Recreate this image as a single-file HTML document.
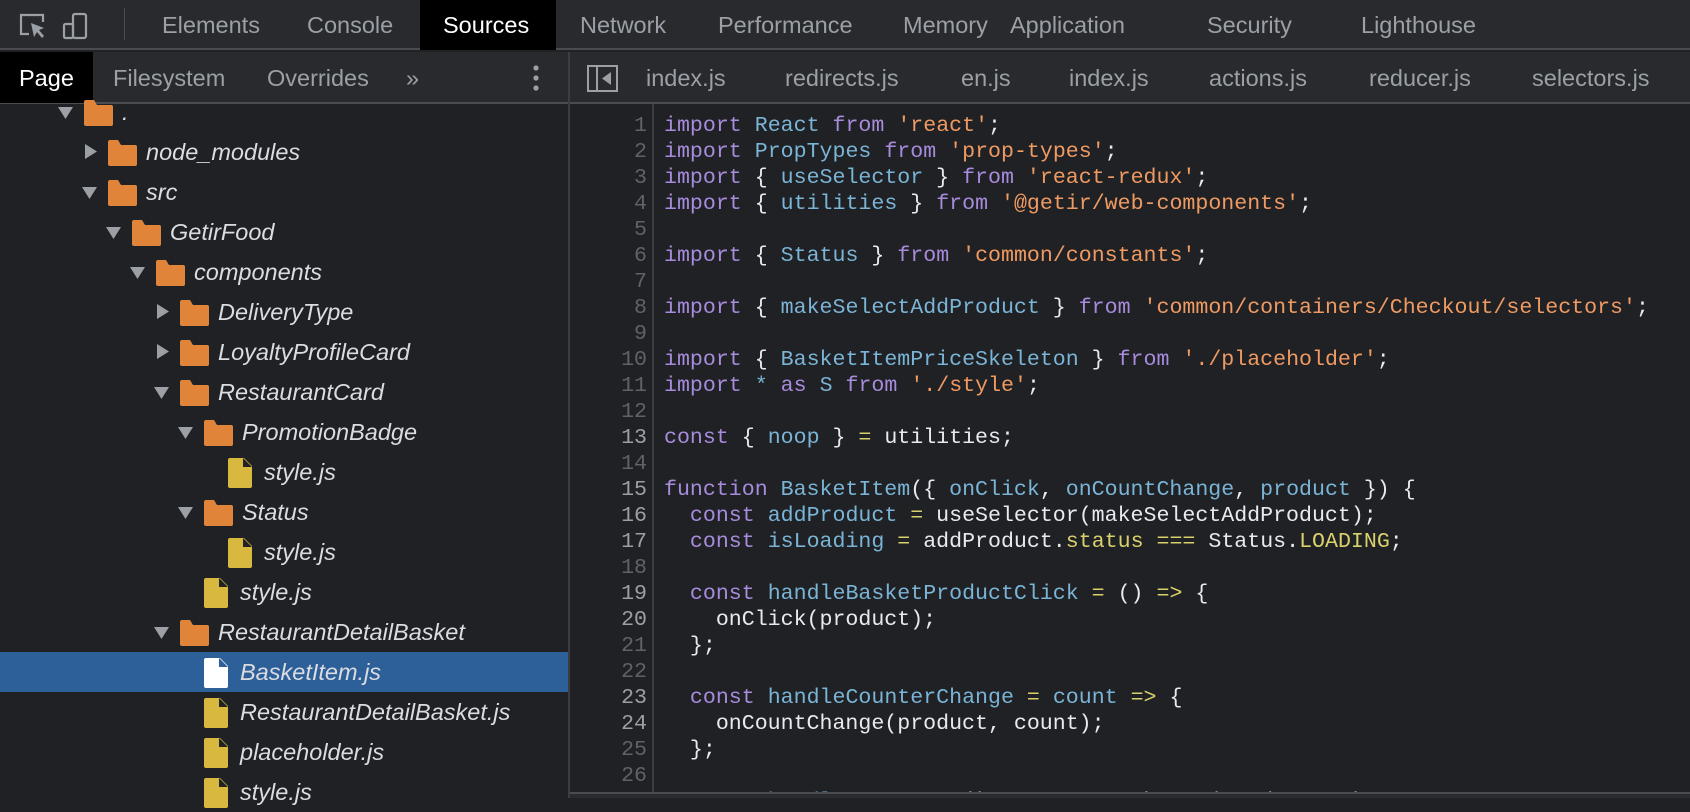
<!DOCTYPE html>
<html><head><meta charset="utf-8"><style>
*{margin:0;padding:0;box-sizing:border-box}
body{width:1690px;height:798px;overflow:hidden;background:#202124;font-family:"Liberation Sans",sans-serif;position:relative}
.a{position:absolute;white-space:nowrap}
.tb{left:0;top:0;width:1690px;height:50px;background:#292a2d;border-bottom:2px solid #4a4c50}
.r2{left:0;top:52px;width:1690px;height:52px;background:#292a2d;border-bottom:2px solid #4a4c50}
.t{font-size:23.5px;color:#9aa0a6;line-height:50px;top:0}
.t2{font-size:23.5px;color:#9aa0a6;line-height:52px;top:52px}
.tree .row{position:absolute;left:0;width:568px;height:40px}
.tree .nm{position:absolute;top:0;line-height:40px;font-size:23.5px;font-style:italic;color:#dadce0}
.code{font-family:"Liberation Mono",monospace;font-size:21.6px;line-height:26px}
.ln{position:absolute;width:80px;text-align:right;color:#5f6368}
.ln.b{color:#9aa0a6}
.cl{position:absolute;left:664px;color:#e8eaed}
.k{color:#a78bdc}.i{color:#7ab4d6}.s{color:#ef9a62}.o{color:#d9d16c}
</style></head><body>
<div class="a tb"></div>
<svg class="a" style="left:18px;top:12px" width="70" height="28" viewBox="0 0 70 28">
<path d="M11 22H3V3h22v7" fill="none" stroke="#9aa0a6" stroke-width="2.2"/>
<path d="M13 11l13 5-5 2 5 6-2 2-5-6-3 5z" fill="#9aa0a6"/>
<rect x="55" y="2" width="13" height="24" rx="2" fill="none" stroke="#9aa0a6" stroke-width="2.2"/>
<rect x="46" y="12" width="9" height="14" rx="1.5" fill="none" stroke="#9aa0a6" stroke-width="2.2"/>
</svg>
<div class="a" style="left:124px;top:8px;width:1px;height:32px;background:#4a4c50"></div>
<div class="a" style="left:420px;top:0;width:136px;height:50px;background:#000"></div>
<div class="a t" style="left:162px">Elements</div>
<div class="a t" style="left:307px">Console</div>
<div class="a t" style="left:443px;color:#fff">Sources</div>
<div class="a t" style="left:580px">Network</div>
<div class="a t" style="left:718px">Performance</div>
<div class="a t" style="left:903px">Memory</div>
<div class="a t" style="left:1010px">Application</div>
<div class="a t" style="left:1207px">Security</div>
<div class="a t" style="left:1361px">Lighthouse</div>

<div class="a r2"></div>
<div class="a" style="left:0;top:52px;width:93px;height:51px;background:#000"></div>
<div class="a t2" style="left:19px;color:#fff">Page</div>
<div class="a t2" style="left:113px">Filesystem</div>
<div class="a t2" style="left:267px">Overrides</div>
<div class="a t2" style="left:406px">»</div>
<svg class="a" style="left:531px;top:64px" width="10" height="30"><circle cx="5" cy="4" r="2.6" fill="#9aa0a6"/><circle cx="5" cy="14" r="2.6" fill="#9aa0a6"/><circle cx="5" cy="24" r="2.6" fill="#9aa0a6"/></svg>
<div class="a" style="left:568px;top:52px;width:2px;height:746px;background:#3c3d41"></div>
<svg class="a" style="left:587px;top:65px" width="32" height="28"><rect x="1" y="1" width="29" height="25" fill="none" stroke="#9aa0a6" stroke-width="2"/><line x1="10" y1="1" x2="10" y2="26" stroke="#9aa0a6" stroke-width="2"/><path d="M24 7v13l-9-6.5z" fill="#9aa0a6"/></svg>
<div class="a t2" style="left:646px">index.js</div>
<div class="a t2" style="left:785px">redirects.js</div>
<div class="a t2" style="left:961px">en.js</div>
<div class="a t2" style="left:1069px">index.js</div>
<div class="a t2" style="left:1209px">actions.js</div>
<div class="a t2" style="left:1369px">reducer.js</div>
<div class="a t2" style="left:1532px">selectors.js</div>

<div class="tree" id="tree"></div>
<div class="a" style="left:570px;top:104px;width:1120px;height:688px;overflow:hidden">
<div class="code" id="code" style="position:absolute;left:-570px;top:-104px;width:1690px;height:798px"></div>
</div>
<div class="a" style="left:652px;top:104px;width:2px;height:688px;background:#3c3d41"></div>
<div class="a" style="left:570px;top:792px;width:1120px;height:6px;background:#2a2b2e;border-top:2px solid #4a4c50"></div>

<script>
var T=[[0,'f','d','.'],[1,'f','r','node_modules'],[1,'f','d','src'],[2,'f','d','GetirFood'],[3,'f','d','components'],[4,'f','r','DeliveryType'],[4,'f','r','LoyaltyProfileCard'],[4,'f','d','RestaurantCard'],[5,'f','d','PromotionBadge'],[6,'j','','style.js'],[5,'f','d','Status'],[6,'j','','style.js'],[5,'j','','style.js'],[4,'f','d','RestaurantDetailBasket'],[5,'j','','BasketItem.js',1],[5,'j','','RestaurantDetailBasket.js'],[5,'j','','placeholder.js'],[5,'j','','style.js']];
var h='';
T.forEach(function(r,i){
 var ax=58+24*r[0],top=92+40*i,sel=r[4];
 h+='<div class="row" style="top:'+top+'px;'+(sel?'background:#2d5f99':'')+'">';
 if(r[2]=='d')h+='<svg class="a" style="left:'+ax+'px;top:14px" width="16" height="14"><path d="M0 1h15L7.5 13z" fill="#9aa0a6"/></svg>';
 if(r[2]=='r')h+='<svg class="a" style="left:'+(ax+2)+'px;top:12px" width="14" height="16"><path d="M1 0v15L13 7.5z" fill="#9aa0a6"/></svg>';
 var ix=ax+26;
 if(r[1]=='f')h+='<svg class="a" style="left:'+ix+'px;top:8px" width="29" height="26"><path d="M0 2a2 2 0 0 1 2-2h8l3 5h14a2 2 0 0 1 2 2v17a2 2 0 0 1-2 2H2a2 2 0 0 1-2-2z" fill="#e0843a"/></svg>';
 else h+='<svg class="a" style="left:'+ix+'px;top:6px" width="24" height="30"><path d="M2 0h14l8 8v20a2 2 0 0 1-2 2H2a2 2 0 0 1-2-2V2a2 2 0 0 1 2-2z" fill="'+(sel?'#fff':'#d9b83f')+'"/><path d="M15 0l9 9h-9z" fill="'+(sel?'#2d5f99':'#202124')+'"/></svg>';
 h+='<div class="nm" style="left:'+(ax+(r[1]=='f'?64:62))+'px">'+r[3]+'</div></div>';
});
document.getElementById('tree').innerHTML=h;
function k(s){return '<span class="k">'+s+'</span>'}
function i(s){return '<span class="i">'+s+'</span>'}
function s(x){return '<span class="s">'+x+'</span>'}
function o(x){return '<span class="o">'+x+'</span>'}
var L=[
k('import')+' '+i('React')+' '+k('from')+' '+s("'react'")+';',
k('import')+' '+i('PropTypes')+' '+k('from')+' '+s("'prop-types'")+';',
k('import')+' { '+i('useSelector')+' } '+k('from')+' '+s("'react-redux'")+';',
k('import')+' { '+i('utilities')+' } '+k('from')+' '+s("'@getir/web-components'")+';',
'',
k('import')+' { '+i('Status')+' } '+k('from')+' '+s("'common/constants'")+';',
'',
k('import')+' { '+i('makeSelectAddProduct')+' } '+k('from')+' '+s("'common/containers/Checkout/selectors'")+';',
'',
k('import')+' { '+i('BasketItemPriceSkeleton')+' } '+k('from')+' '+s("'./placeholder'")+';',
k('import')+' '+i('*')+' '+k('as')+' '+i('S')+' '+k('from')+' '+s("'./style'")+';',
'',
k('const')+' { '+i('noop')+' } '+o('=')+' utilities;',
'',
k('function')+' '+i('BasketItem')+'({ '+i('onClick')+', '+i('onCountChange')+', '+i('product')+' }) {',
'  '+k('const')+' '+i('addProduct')+' '+o('=')+' useSelector(makeSelectAddProduct);',
'  '+k('const')+' '+i('isLoading')+' '+o('=')+' addProduct.'+o('status')+' '+o('===')+' Status.'+o('LOADING')+';',
'',
'  '+k('const')+' '+i('handleBasketProductClick')+' '+o('=')+' () '+o('=&gt;')+' {',
'    onClick(product);',
'  };',
'',
'  '+k('const')+' '+i('handleCounterChange')+' '+o('=')+' '+i('count')+' '+o('=&gt;')+' {',
'    onCountChange(product, count);',
'  };',
'',
'  '+k('const')+' '+i('handleRemove')+' '+o('=')+' () '+o('=&gt;')+' onCountChange(product, 0);'
];
var B=[13,15,16,17,19,20,23,24,27];
var c='';
L.forEach(function(l,n){var top=113+26*n;
 c+='<div class="ln'+(B.indexOf(n+1)>=0?' b':'')+'" style="top:'+top+'px;left:567px">'+(n+1)+'</div>';
 c+='<div class="cl" style="top:'+top+'px;white-space:pre">'+l+'</div>';});
document.getElementById('code').innerHTML=c;
</script>
</body></html>
